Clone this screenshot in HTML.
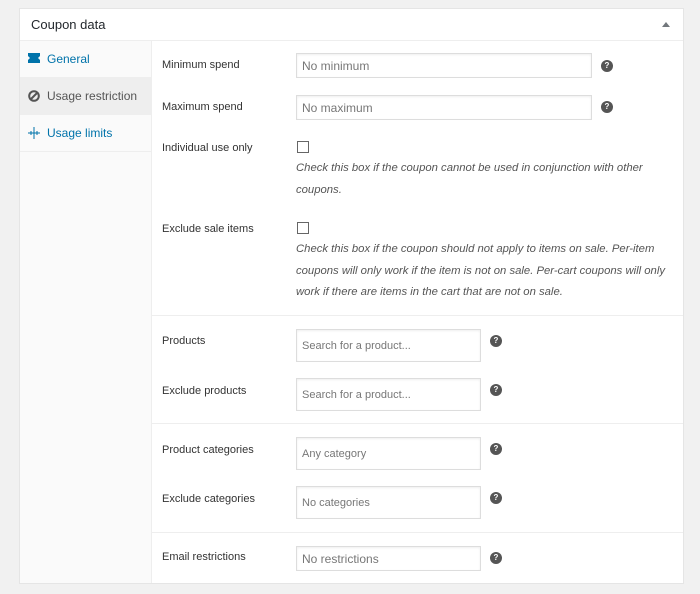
<!DOCTYPE html>
<html><head><meta charset="utf-8">
<style>
*{margin:0;padding:0;box-sizing:border-box}
body{width:700px;height:594px;background:#f1f1f1;font-family:"Liberation Sans",sans-serif;position:relative;overflow:hidden}
.box{position:absolute;left:19px;top:8px;width:665px;height:576px;background:#fff;border:1px solid #e5e5e5}
.hd{position:absolute;left:0;top:0;width:663px;height:32px;border-bottom:1px solid #eee;font-size:13px;color:#23282d;padding:8px 0 0 11px}
.tri{position:absolute;right:13px;top:13px;width:0;height:0;border-left:4px solid transparent;border-right:4px solid transparent;border-bottom:5px solid #72777c}
.side{position:absolute;left:0;top:32px;width:132px;height:542px;background:#fafafa;border-right:1px solid #eee}
.tab{position:absolute;left:0;width:131px;height:37px;font-size:12px;color:#0073aa;padding:11px 0 0 27px;border-bottom:1px solid #eee}
.tab svg{position:absolute;left:8px;top:12px}
.tab.act{background:#eee;color:#555}
.l{position:absolute;left:162px;font-size:11px;color:#333}
.in{position:absolute;left:296px;border:1px solid #ddd;background:#fff;box-shadow:inset 0 1px 2px rgba(0,0,0,.07);font-size:12px;color:#777;padding:2px 0 0 5px}
.q{position:absolute;width:12px;height:12px;border-radius:50%;background:#555;color:#fff;font-size:8px;font-weight:bold;text-align:center;line-height:12px}
.cb{position:absolute;left:297px;width:12px;height:12px;border:1px solid #666;background:#fff}
.d{position:absolute;left:296px;font-size:11.3px;font-style:italic;color:#555;line-height:21.5px}
.sep{position:absolute;left:152px;width:531px;height:1px;background:#eee}
</style></head><body>
<div class="box">
 <div class="hd">Coupon data<div class="tri"></div></div>
 <div class="side">
  <div class="tab" style="top:0"><svg width="12" height="10" viewBox="0 0 12 10"><path d="M0 0H12V3L10 5L12 7V10H0V7L2 5L0 3Z" fill="#0073aa"/></svg>General</div>
  <div class="tab act" style="top:37px"><svg width="12" height="12" viewBox="0 0 12 12"><circle cx="6" cy="6" r="4.8" fill="none" stroke="#555" stroke-width="2"/><path d="M3 9L9 3" stroke="#555" stroke-width="2"/></svg>Usage restriction</div>
  <div class="tab" style="top:74px;border-bottom:1px solid #eee"><svg width="12" height="12" viewBox="0 0 12 12"><path d="M6 0V12M0 6H12M3 4V8M9 4V8" stroke="#0073aa" stroke-width="1"/></svg>Usage limits</div>
 </div>
</div>
<div class="l" style="top:59px">Minimum spend</div>
<div class="in" style="top:53px;width:296px;height:25px;line-height:21px">No minimum</div><div class="q" style="left:601px;top:60px">?</div>
<div class="l" style="top:101px">Maximum spend</div>
<div class="in" style="top:95px;width:296px;height:25px;line-height:21px">No maximum</div><div class="q" style="left:601px;top:101px">?</div>
<div class="l" style="top:142px">Individual use only</div>
<div class="cb" style="top:141px"></div>
<div class="d" style="top:158px">Check this box if the coupon cannot be used in conjunction with other<br>coupons.</div>
<div class="l" style="top:223px">Exclude sale items</div>
<div class="cb" style="top:222px"></div>
<div class="d" style="top:239px">Check this box if the coupon should not apply to items on sale. Per-item<br>coupons will only work if the item is not on sale. Per-cart coupons will only<br>work if there are items in the cart that are not on sale.</div>
<div class="sep" style="top:315px"></div>
<div class="l" style="top:335px">Products</div>
<div class="in" style="top:329px;width:185px;height:33px;line-height:29px;font-size:11px">Search for a product...</div><div class="q" style="left:490px;top:335px">?</div>
<div class="l" style="top:385px">Exclude products</div>
<div class="in" style="top:378px;width:185px;height:33px;line-height:29px;font-size:11px">Search for a product...</div><div class="q" style="left:490px;top:384px">?</div>
<div class="sep" style="top:423px"></div>
<div class="l" style="top:444px">Product categories</div>
<div class="in" style="top:437px;width:185px;height:33px;line-height:29px;font-size:11px">Any category</div><div class="q" style="left:490px;top:443px">?</div>
<div class="l" style="top:493px">Exclude categories</div>
<div class="in" style="top:486px;width:185px;height:33px;line-height:29px;font-size:11px">No categories</div><div class="q" style="left:490px;top:492px">?</div>
<div class="sep" style="top:532px"></div>
<div class="l" style="top:551px">Email restrictions</div>
<div class="in" style="top:546px;width:185px;height:25px;line-height:21px">No restrictions</div><div class="q" style="left:490px;top:552px">?</div>
</body></html>
